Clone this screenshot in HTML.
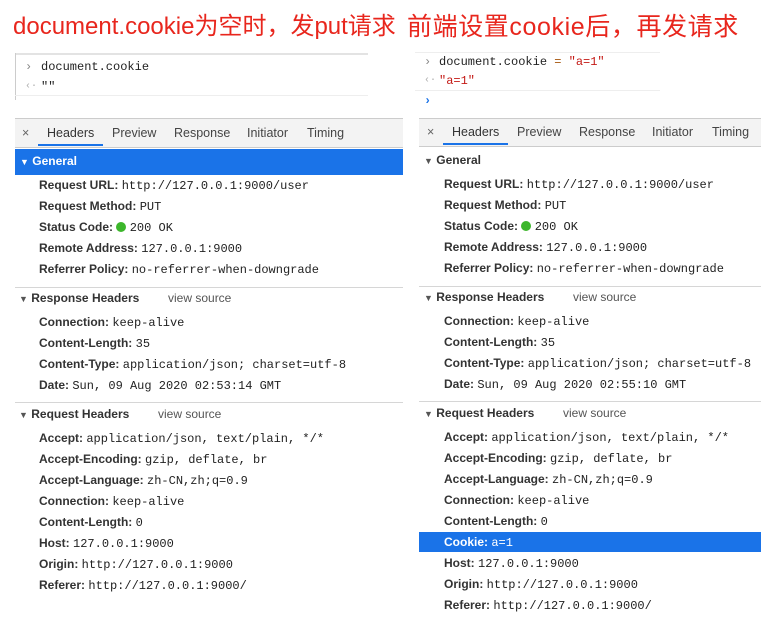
<!DOCTYPE html>
<html><head><meta charset="utf-8"><style>
body{margin:0;width:761px;height:632px;background:#fff;position:relative;overflow:hidden;font-family:"Liberation Sans",Arial,sans-serif;}
div{position:absolute;white-space:nowrap}
.t{color:#e8261d;font-family:"Liberation Sans","Noto Sans CJK SC",sans-serif;top:12px;line-height:30px}
.r{font-size:12px;line-height:20px;color:#222}
.r b{color:#333;font-weight:bold}
.m{font-family:"Liberation Mono",monospace;font-size:12px;color:#222}
.h{font-size:12px;font-weight:bold;color:#333;line-height:20px}
.vs{font-size:12px;color:#555;line-height:20px}
.ln{height:1px;background:#d6d6d6}
.tab{font-size:12.5px;color:#333;line-height:20px}
.con{font-family:"Liberation Mono",monospace;font-size:12px;line-height:20px;color:#222}
</style></head><body>
<div class="t" style="left:13px;font-size:24px">document.cookie为空时，发put请求</div>
<div class="t" style="left:407px;font-size:25px;letter-spacing:0.6px">前端设置cookie后，再发请求</div>

<!-- left console -->
<div class="ln" style="left:15px;top:53px;width:353px;background:#e3e3e3;height:2px"></div>
<div style="left:15px;top:53px;width:1px;height:47px;background:#ccc"></div>
<div class="con" style="left:25px;top:57px;color:#888">›</div>
<div class="con" style="left:41px;top:57px">document.cookie</div>
<div class="con" style="left:25px;top:77px;color:#aaa;font-size:10px">‹·</div>
<div class="con" style="left:41px;top:77px">""</div>
<div class="ln" style="left:15px;top:95px;width:353px;background:#eee"></div>

<!-- left tabs -->
<div style="left:15px;top:118px;width:388px;height:28px;background:#f3f3f3;border-top:1px solid #ccc;border-bottom:1px solid #ccc"></div>
<div class="tab" style="left:22px;top:123px;color:#666">×</div>
<div class="tab" style="left:47px;top:123px">Headers</div>
<div style="left:38px;top:144px;width:65px;height:2px;background:#1a73e8"></div>
<div class="tab" style="left:112px;top:123px;color:#444">Preview</div>
<div class="tab" style="left:174px;top:123px;color:#444">Response</div>
<div class="tab" style="left:247px;top:123px;color:#444">Initiator</div>
<div class="tab" style="left:307px;top:123px;color:#444">Timing</div>
<div style="left:15px;top:149px;width:388px;height:26px;background:#1a73e8"></div>
<div class="h" style="left:20px;top:151px;color:#fff"><span style="font-size:9px">▼</span> General</div>
<div class="r" style="left:39px;top:175px"><b>Request URL:</b> <span class="m">http://127.0.0.1:9000/user</span></div>
<div class="r" style="left:39px;top:196px"><b>Request Method:</b> <span class="m">PUT</span></div>
<div class="r" style="left:39px;top:217px"><b>Status Code:</b> <span style="display:inline-block;width:10px;height:10px;border-radius:5px;background:#3cb62b;vertical-align:-1px"></span> <span class="m">200 OK</span></div>
<div class="r" style="left:39px;top:238px"><b>Remote Address:</b> <span class="m">127.0.0.1:9000</span></div>
<div class="r" style="left:39px;top:259px"><b>Referrer Policy:</b> <span class="m">no-referrer-when-downgrade</span></div>
<div class="ln" style="left:15px;top:287px;width:388px"></div>
<div class="h" style="left:19px;top:288px"><span style="font-size:9px;color:#555">▼</span> Response Headers</div>
<div class="vs" style="left:168px;top:288px">view source</div>
<div class="r" style="left:39px;top:312px"><b>Connection:</b> <span class="m">keep-alive</span></div>
<div class="r" style="left:39px;top:333px"><b>Content-Length:</b> <span class="m">35</span></div>
<div class="r" style="left:39px;top:354px"><b>Content-Type:</b> <span class="m">application/json; charset=utf-8</span></div>
<div class="r" style="left:39px;top:375px"><b>Date:</b> <span class="m">Sun, 09 Aug 2020 02:53:14 GMT</span></div>
<div class="ln" style="left:15px;top:402px;width:388px"></div>
<div class="h" style="left:19px;top:404px"><span style="font-size:9px;color:#555">▼</span> Request Headers</div>
<div class="vs" style="left:158px;top:404px">view source</div>
<div class="r" style="left:39px;top:428px"><b>Accept:</b> <span class="m">application/json, text/plain, */*</span></div>
<div class="r" style="left:39px;top:449px"><b>Accept-Encoding:</b> <span class="m">gzip, deflate, br</span></div>
<div class="r" style="left:39px;top:470px"><b>Accept-Language:</b> <span class="m">zh-CN,zh;q=0.9</span></div>
<div class="r" style="left:39px;top:491px"><b>Connection:</b> <span class="m">keep-alive</span></div>
<div class="r" style="left:39px;top:512px"><b>Content-Length:</b> <span class="m">0</span></div>
<div class="r" style="left:39px;top:533px"><b>Host:</b> <span class="m">127.0.0.1:9000</span></div>
<div class="r" style="left:39px;top:554px"><b>Origin:</b> <span class="m">http://127.0.0.1:9000</span></div>
<div class="r" style="left:39px;top:575px"><b>Referer:</b> <span class="m">http://127.0.0.1:9000/</span></div>

<!-- right console -->
<div class="ln" style="left:415px;top:52px;width:245px;background:#eee"></div>
<div class="con" style="left:424px;top:52px;color:#888">›</div>
<div class="con" style="left:439px;top:52px">document.cookie <span style="color:#a5530a">=</span> <span style="color:#c41a16">"a=1"</span></div>
<div class="con" style="left:424px;top:71px;color:#aaa;font-size:10px">‹·</div>
<div class="con" style="left:439px;top:71px;color:#c41a16">"a=1"</div>
<div class="ln" style="left:415px;top:90px;width:245px;background:#eee"></div>
<div class="con" style="left:424px;top:91px;color:#1a73e8;font-weight:bold">›</div>

<!-- right tabs -->
<div style="left:419px;top:118px;width:342px;height:27px;background:#f3f3f3;border-top:1px solid #ccc;border-bottom:1px solid #ccc"></div>
<div class="tab" style="left:427px;top:122px;color:#666">×</div>
<div class="tab" style="left:452px;top:122px">Headers</div>
<div style="left:443px;top:143px;width:65px;height:2px;background:#1a73e8"></div>
<div class="tab" style="left:517px;top:122px;color:#444">Preview</div>
<div class="tab" style="left:579px;top:122px;color:#444">Response</div>
<div class="tab" style="left:652px;top:122px;color:#444">Initiator</div>
<div class="tab" style="left:712px;top:122px;color:#444">Timing</div>
<div class="h" style="left:424px;top:150px"><span style="font-size:9px;color:#555">▼</span> General</div>
<div class="r" style="left:444px;top:174px"><b>Request URL:</b> <span class="m">http://127.0.0.1:9000/user</span></div>
<div class="r" style="left:444px;top:195px"><b>Request Method:</b> <span class="m">PUT</span></div>
<div class="r" style="left:444px;top:216px"><b>Status Code:</b> <span style="display:inline-block;width:10px;height:10px;border-radius:5px;background:#3cb62b;vertical-align:-1px"></span> <span class="m">200 OK</span></div>
<div class="r" style="left:444px;top:237px"><b>Remote Address:</b> <span class="m">127.0.0.1:9000</span></div>
<div class="r" style="left:444px;top:258px"><b>Referrer Policy:</b> <span class="m">no-referrer-when-downgrade</span></div>
<div class="ln" style="left:419px;top:286px;width:342px"></div>
<div class="h" style="left:424px;top:287px"><span style="font-size:9px;color:#555">▼</span> Response Headers</div>
<div class="vs" style="left:573px;top:287px">view source</div>
<div class="r" style="left:444px;top:311px"><b>Connection:</b> <span class="m">keep-alive</span></div>
<div class="r" style="left:444px;top:332px"><b>Content-Length:</b> <span class="m">35</span></div>
<div class="r" style="left:444px;top:353px"><b>Content-Type:</b> <span class="m">application/json; charset=utf-8</span></div>
<div class="r" style="left:444px;top:374px"><b>Date:</b> <span class="m">Sun, 09 Aug 2020 02:55:10 GMT</span></div>
<div class="ln" style="left:419px;top:401px;width:342px"></div>
<div class="h" style="left:424px;top:403px"><span style="font-size:9px;color:#555">▼</span> Request Headers</div>
<div class="vs" style="left:563px;top:403px">view source</div>
<div class="r" style="left:444px;top:427px"><b>Accept:</b> <span class="m">application/json, text/plain, */*</span></div>
<div class="r" style="left:444px;top:448px"><b>Accept-Encoding:</b> <span class="m">gzip, deflate, br</span></div>
<div class="r" style="left:444px;top:469px"><b>Accept-Language:</b> <span class="m">zh-CN,zh;q=0.9</span></div>
<div class="r" style="left:444px;top:490px"><b>Connection:</b> <span class="m">keep-alive</span></div>
<div class="r" style="left:444px;top:511px"><b>Content-Length:</b> <span class="m">0</span></div>
<div style="left:419px;top:532px;width:342px;height:20px;background:#1a73e8"></div>
<div class="r" style="left:444px;top:532px;color:#fff"><b style="color:#fff">Cookie:</b> <span class="m" style="color:#fff">a=1</span></div>
<div class="r" style="left:444px;top:553px"><b>Host:</b> <span class="m">127.0.0.1:9000</span></div>
<div class="r" style="left:444px;top:574px"><b>Origin:</b> <span class="m">http://127.0.0.1:9000</span></div>
<div class="r" style="left:444px;top:595px"><b>Referer:</b> <span class="m">http://127.0.0.1:9000/</span></div>
</body></html>
